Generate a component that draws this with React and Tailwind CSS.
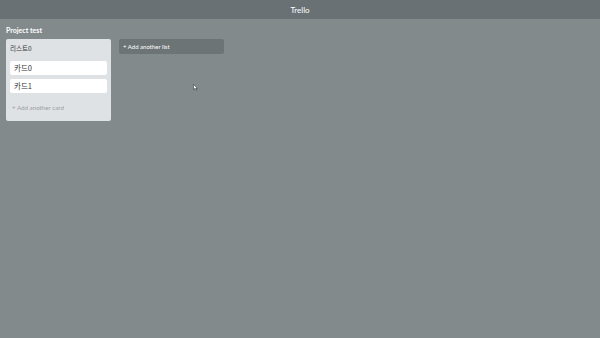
export default function App() {
  return (
    <div className="relative w-[600px] h-[338px] bg-[#838a8c] overflow-hidden" style={{ fontFamily: "Lato, 'Noto Sans CJK KR', sans-serif" }}>
      <div className="h-[19px] bg-[#6a7174] flex items-center justify-center text-white text-[8px]">Trello</div>
      <div className="px-[6px] pt-[6px]">
        <div className="text-white font-bold text-[7px] leading-[10px] h-[14px]">Project test</div>
        <div className="flex items-start gap-[8px]">
          <div className="w-[105px] bg-[#dfe2e5] rounded-[2px] px-[4px] pt-[5px] pb-[9px]">
            <div className="text-[#333] text-[6.5px] leading-[9px] px-[0px] mb-[8px]" style={{ fontFamily: "'Noto Sans CJK KR', Lato, sans-serif" }}>리스트0</div>
            <div className="flex flex-col gap-[4px]">
              <div className="bg-white rounded-[2px] h-[14px] flex items-center px-[4px] text-[7.5px] text-[#333]" style={{ fontFamily: "'Noto Sans CJK KR', Lato, sans-serif" }}>카드0</div>
              <div className="bg-white rounded-[2px] h-[14px] flex items-center px-[4px] text-[7.5px] text-[#333]" style={{ fontFamily: "'Noto Sans CJK KR', Lato, sans-serif" }}>카드1</div>
            </div>
            <div className="mt-[11px] px-[2px] text-[6.2px] text-[#9aa0a4] leading-[8px]">+ Add another card</div>
          </div>
          <div className="w-[105px] h-[15px] bg-[#6d7476] rounded-[2px] flex items-center px-[4px] text-white text-[6px]">+ Add another list</div>
        </div>
      </div>
      <svg className="absolute left-[193px] top-[84px]" width="5" height="7" viewBox="0 0 5 7">
        <path d="M0.5 0.5 L0.5 5.5 L1.8 4.4 L2.8 6.5 L3.6 6.1 L2.7 4.1 L4.4 4.1 Z" fill="white" stroke="#222" strokeWidth="0.5" />
      </svg>
    </div>
  );
}
